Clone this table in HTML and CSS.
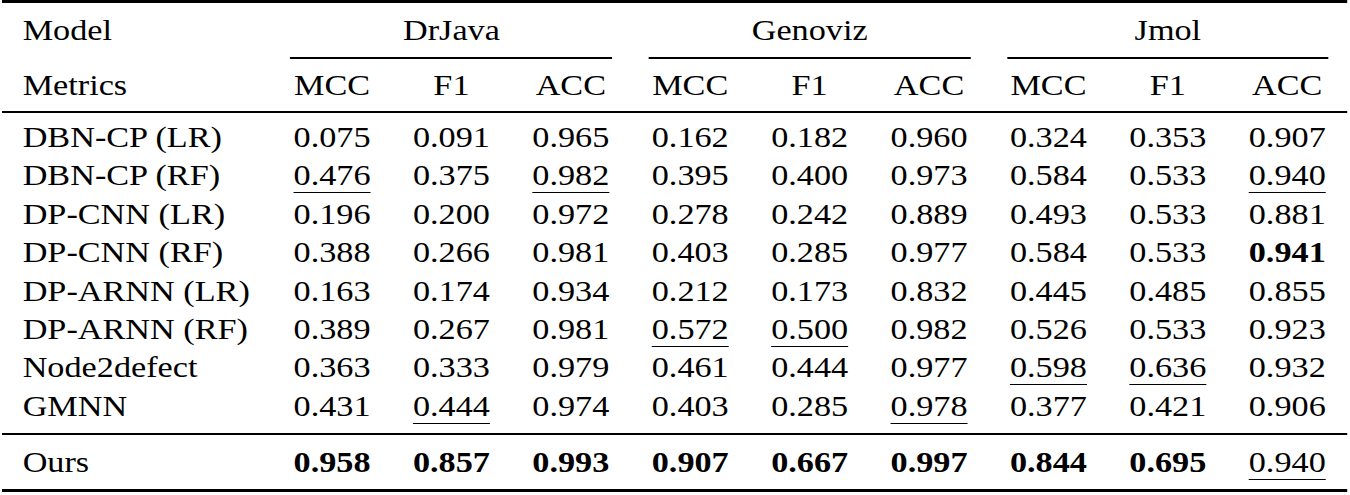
FILE: index.html
```html
<!DOCTYPE html>
<html>
<head>
<meta charset="utf-8">
<link rel="stylesheet" href="styles.css">
</head>
<body>
<div class="table">
  <div class="rule rule-heavy"></div>
  <div class="row row-head1">
    <div class="cell first">Model</div>
    <div class="cell span3">DrJava</div>
    <div class="cell span3">Genoviz</div>
    <div class="cell span3">Jmol</div>
  </div>
  <div class="row row-cmid">
    <div></div>
    <div class="cmid span3"></div>
    <div class="cmid span3"></div>
    <div class="cmid span3"></div>
  </div>
  <div class="row row-head2">
    <div class="cell first">Metrics</div>
    <div class="cell">MCC</div><div class="cell">F1</div><div class="cell">ACC</div>
    <div class="cell">MCC</div><div class="cell">F1</div><div class="cell">ACC</div>
    <div class="cell">MCC</div><div class="cell">F1</div><div class="cell">ACC</div>
  </div>
  <div class="rule rule-mid"></div>
  <div class="body">
    <div class="row data">
      <div class="cell first">DBN-CP (LR)</div>
      <div class="cell">0.075</div><div class="cell">0.091</div><div class="cell">0.965</div>
      <div class="cell">0.162</div><div class="cell">0.182</div><div class="cell">0.960</div>
      <div class="cell">0.324</div><div class="cell">0.353</div><div class="cell">0.907</div>
    </div>
    <div class="row data">
      <div class="cell first">DBN-CP (RF)</div>
      <div class="cell"><span class="u">0.476</span></div><div class="cell">0.375</div><div class="cell"><span class="u">0.982</span></div>
      <div class="cell">0.395</div><div class="cell">0.400</div><div class="cell">0.973</div>
      <div class="cell">0.584</div><div class="cell">0.533</div><div class="cell"><span class="u">0.940</span></div>
    </div>
    <div class="row data">
      <div class="cell first">DP-CNN (LR)</div>
      <div class="cell">0.196</div><div class="cell">0.200</div><div class="cell">0.972</div>
      <div class="cell">0.278</div><div class="cell">0.242</div><div class="cell">0.889</div>
      <div class="cell">0.493</div><div class="cell">0.533</div><div class="cell">0.881</div>
    </div>
    <div class="row data">
      <div class="cell first">DP-CNN (RF)</div>
      <div class="cell">0.388</div><div class="cell">0.266</div><div class="cell">0.981</div>
      <div class="cell">0.403</div><div class="cell">0.285</div><div class="cell">0.977</div>
      <div class="cell">0.584</div><div class="cell">0.533</div><div class="cell"><b>0.941</b></div>
    </div>
    <div class="row data">
      <div class="cell first">DP-ARNN (LR)</div>
      <div class="cell">0.163</div><div class="cell">0.174</div><div class="cell">0.934</div>
      <div class="cell">0.212</div><div class="cell">0.173</div><div class="cell">0.832</div>
      <div class="cell">0.445</div><div class="cell">0.485</div><div class="cell">0.855</div>
    </div>
    <div class="row data">
      <div class="cell first">DP-ARNN (RF)</div>
      <div class="cell">0.389</div><div class="cell">0.267</div><div class="cell">0.981</div>
      <div class="cell"><span class="u">0.572</span></div><div class="cell"><span class="u">0.500</span></div><div class="cell">0.982</div>
      <div class="cell">0.526</div><div class="cell">0.533</div><div class="cell">0.923</div>
    </div>
    <div class="row data">
      <div class="cell first">Node2defect</div>
      <div class="cell">0.363</div><div class="cell">0.333</div><div class="cell">0.979</div>
      <div class="cell">0.461</div><div class="cell">0.444</div><div class="cell">0.977</div>
      <div class="cell"><span class="u">0.598</span></div><div class="cell"><span class="u">0.636</span></div><div class="cell">0.932</div>
    </div>
    <div class="row data">
      <div class="cell first">GMNN</div>
      <div class="cell">0.431</div><div class="cell"><span class="u">0.444</span></div><div class="cell">0.974</div>
      <div class="cell">0.403</div><div class="cell">0.285</div><div class="cell"><span class="u">0.978</span></div>
      <div class="cell">0.377</div><div class="cell">0.421</div><div class="cell">0.906</div>
    </div>
  </div>
  <div class="rule rule-mid rule-ours"></div>
  <div class="row data ours">
    <div class="cell first">Ours</div>
    <div class="cell"><b>0.958</b></div><div class="cell"><b>0.857</b></div><div class="cell"><b>0.993</b></div>
    <div class="cell"><b>0.907</b></div><div class="cell"><b>0.667</b></div><div class="cell"><b>0.997</b></div>
    <div class="cell"><b>0.844</b></div><div class="cell"><b>0.695</b></div><div class="cell"><span class="u">0.940</span></div>
  </div>
  <div class="rule rule-heavy rule-bottom"></div>
</div>
</body>
</html>
```

FILE: styles.css
```css
html, body {
  margin: 0;
  padding: 0;
  background: #ffffff;
}

.table {
  width: 1139.9px;
  margin-left: 2px;
  transform: scaleX(1.18);
  transform-origin: 0 0;
  font-family: "Liberation Serif", "Times New Roman", serif;
  font-size: 29px;
  color: #000;
}

.rule {
  background: #000;
}

.rule-heavy {
  height: 3px;
}

.rule-mid {
  height: 2px;
  margin-top: 7px;
}

.rule-ours {
  margin-top: 8px;
}

.rule-bottom {
  margin-top: 7px;
}

.row {
  display: grid;
  grid-template-columns: 229.1px repeat(9, 101.2px);
}

.cell {
  height: 38px;
  line-height: 38px;
  text-align: center;
  white-space: nowrap;
}

.cell.first {
  text-align: left;
  padding-left: 17.5px;
}

.span3 {
  grid-column: span 3;
}

.row-head1 {
  padding-top: 8px;
}

.row-cmid {
  margin-top: 8px;
  height: 2px;
}

.cmid {
  margin: 0 15.3px;
  height: 1.5px;
  background: #000;
}

.row-head2 {
  margin-top: 7px;
}

.body {
  padding-top: 5px;
}

.data .cell {
  height: 38.4px;
  line-height: 38px;
}

.ours {
  margin-top: 8px;
}

.u {
  text-decoration: underline;
  text-decoration-thickness: 1px;
  text-underline-offset: 7px;
}

b {
  font-weight: bold;
}
```
